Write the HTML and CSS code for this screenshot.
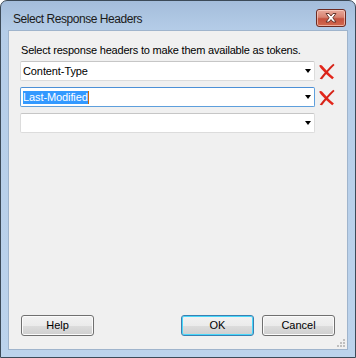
FILE: index.html
```html
<!DOCTYPE html>
<html>
<head>
<meta charset="utf-8">
<link rel="stylesheet" href="styles.css">
</head>
<body>
<div class="window">
  <div class="titlebar">
    <span class="title">Select Response Headers</span>
    <div class="close">
      <svg width="30" height="18" viewBox="0 0 30 18">
        <path d="M10 4.5 L13 4.5 L15 7 L17 4.5 L20 4.5 L16.8 8.8 L20 13 L17 13 L15 10.6 L13 13 L10 13 L13.2 8.8 Z" fill="#fff" stroke="#5a2a22" stroke-width="0.9" stroke-linejoin="round"/>
      </svg>
    </div>
  </div>
  <div class="client">
    <div class="label">Select response headers to make them available as tokens.</div>
    <div class="rows">
      <div class="row">
        <div class="combo"><span class="value">Content-Type</span><span class="arrow"></span></div>
        <svg class="del" width="17" height="17" viewBox="0 0 16 16">
          <path d="M1.2 2.4 C2.4 1.4 3.4 2 4.6 3.2 C7 5.8 10.2 9.8 15 13.6 L13.4 15.4 C9 11.8 5.8 8.4 3.2 5.6 C2.2 4.4 1.2 3.4 1.2 2.4 Z" fill="#e3261b"/>
          <path d="M14.4 0.8 L15.6 1.8 C11.6 5.8 7.4 10.4 3.8 15.4 L1.6 14.8 C5.8 9.6 10 4.8 14.4 0.8 Z" fill="#d62318"/>
        </svg>
      </div>
      <div class="row">
        <div class="combo focus"><span class="value sel">Last-Modified</span><span class="caret"></span><span class="arrow"></span></div>
        <svg class="del" width="17" height="17" viewBox="0 0 16 16">
          <path d="M1.2 2.4 C2.4 1.4 3.4 2 4.6 3.2 C7 5.8 10.2 9.8 15 13.6 L13.4 15.4 C9 11.8 5.8 8.4 3.2 5.6 C2.2 4.4 1.2 3.4 1.2 2.4 Z" fill="#e3261b"/>
          <path d="M14.4 0.8 L15.6 1.8 C11.6 5.8 7.4 10.4 3.8 15.4 L1.6 14.8 C5.8 9.6 10 4.8 14.4 0.8 Z" fill="#d62318"/>
        </svg>
      </div>
      <div class="row">
        <div class="combo"><span class="value"></span><span class="arrow"></span></div>
      </div>
    </div>
    <div class="buttons">
      <div class="btn">Help</div>
      <div class="spacer"></div>
      <div class="btn default">OK</div>
      <div class="btn">Cancel</div>
    </div>
    <svg class="grip" width="10" height="10" viewBox="0 0 10 10">
      <rect x="7" y="1" width="2" height="2" fill="#bfbfbf"/>
      <rect x="4" y="4" width="2" height="2" fill="#bfbfbf"/>
      <rect x="7" y="4" width="2" height="2" fill="#bfbfbf"/>
      <rect x="1" y="7" width="2" height="2" fill="#bfbfbf"/>
      <rect x="4" y="7" width="2" height="2" fill="#bfbfbf"/>
      <rect x="7" y="7" width="2" height="2" fill="#bfbfbf"/>
    </svg>
  </div>
</div>
</body>
</html>
```

FILE: styles.css
```css
* { box-sizing: border-box; }
html, body { margin: 0; padding: 0; background: #ffffff; }
body { width: 356px; height: 358px; overflow: hidden; font-family: "Liberation Sans", Arial, sans-serif; }

.window {
  width: 356px;
  height: 358px;
  border: 1px solid #3c4a58;
  border-radius: 7px 7px 0 0;
  background: linear-gradient(to bottom, #a4bddb 0px, #b5cde8 30px, #bcd3ec 100%);
  display: flex;
  flex-direction: column;
  padding: 0 7px 7px 7px;
}

.titlebar {
  height: 29px;
  display: flex;
  align-items: flex-start;
  position: relative;
}
.title {
  font-size: 12px;
  letter-spacing: -0.45px;
  color: #1a1a1a;
  margin-top: 11px;
  margin-left: 5px;
  line-height: 14px;
}
.close {
  position: absolute;
  right: 2px;
  top: 8px;
  width: 30px;
  height: 18px;
  border: 1px solid #6d2b22;
  border-radius: 3px;
  background: linear-gradient(to bottom, #e9a99a 0%, #d88372 45%, #c4513e 55%, #d36a4f 100%);
  box-shadow: inset 0 0 0 1px rgba(255,220,210,0.6);
}
.close svg { position: absolute; left: -1px; top: -1px; }

.client {
  flex: 1;
  background: #f0f0f0;
  display: flex;
  flex-direction: column;
  padding: 13px 0 13px 11px;
  position: relative;
  border: 1px solid #9fb4cc;
}

.label {
  font-size: 11px;
  letter-spacing: -0.2px;
  line-height: 13px;
  color: #000;
  margin-left: 1px;
}

.rows {
  margin-top: 4px;
  display: flex;
  flex-direction: column;
  gap: 6px;
}
.row {
  display: flex;
  align-items: center;
  height: 20px;
}
.combo {
  width: 295px;
  height: 20px;
  background: #fff;
  border: 1px solid #dcdcdc;
  border-top-color: #c6c6c6;
  border-radius: 2px;
  display: flex;
  align-items: center;
  padding-left: 2px;
  position: relative;
  font-size: 11px;
}
.combo.focus {
  border-color: #5e9fdc;
  border-top-color: #4b8fd6;
}
.value {
  line-height: 13px;
  height: 13px;
  color: #000;
  letter-spacing: -0.1px;
}
.value.sel {
  background: #3399ff;
  color: #fff;
}
.caret {
  width: 1px;
  height: 13px;
  background: #cc6600;
}
.arrow {
  position: absolute;
  right: 3px;
  top: 7px;
  width: 0;
  height: 0;
  border-left: 3.5px solid transparent;
  border-right: 3.5px solid transparent;
  border-top: 4px solid #000;
}
.del { margin-left: 3px; }

.buttons {
  margin-top: auto;
  display: flex;
  padding-left: 1px;
}
.spacer { width: 79px; }
.btn {
  width: 73px;
  height: 21px;
  margin-right: 8px;
  border: 1px solid #707070;
  border-radius: 3px;
  background: linear-gradient(to bottom, #f2f2f2 0%, #ebebeb 50%, #dddddd 51%, #cfcfcf 100%);
  box-shadow: inset 0 0 0 1px #fbfbfb;
  font-size: 11px;
  line-height: 19px;
  text-align: center;
  color: #000;
}
.btn.default {
  border-color: #3c7fb1;
  box-shadow: inset 0 0 0 1px #48d8fb;
}

.grip {
  position: absolute;
  right: 1px;
  bottom: 1px;
}
```
